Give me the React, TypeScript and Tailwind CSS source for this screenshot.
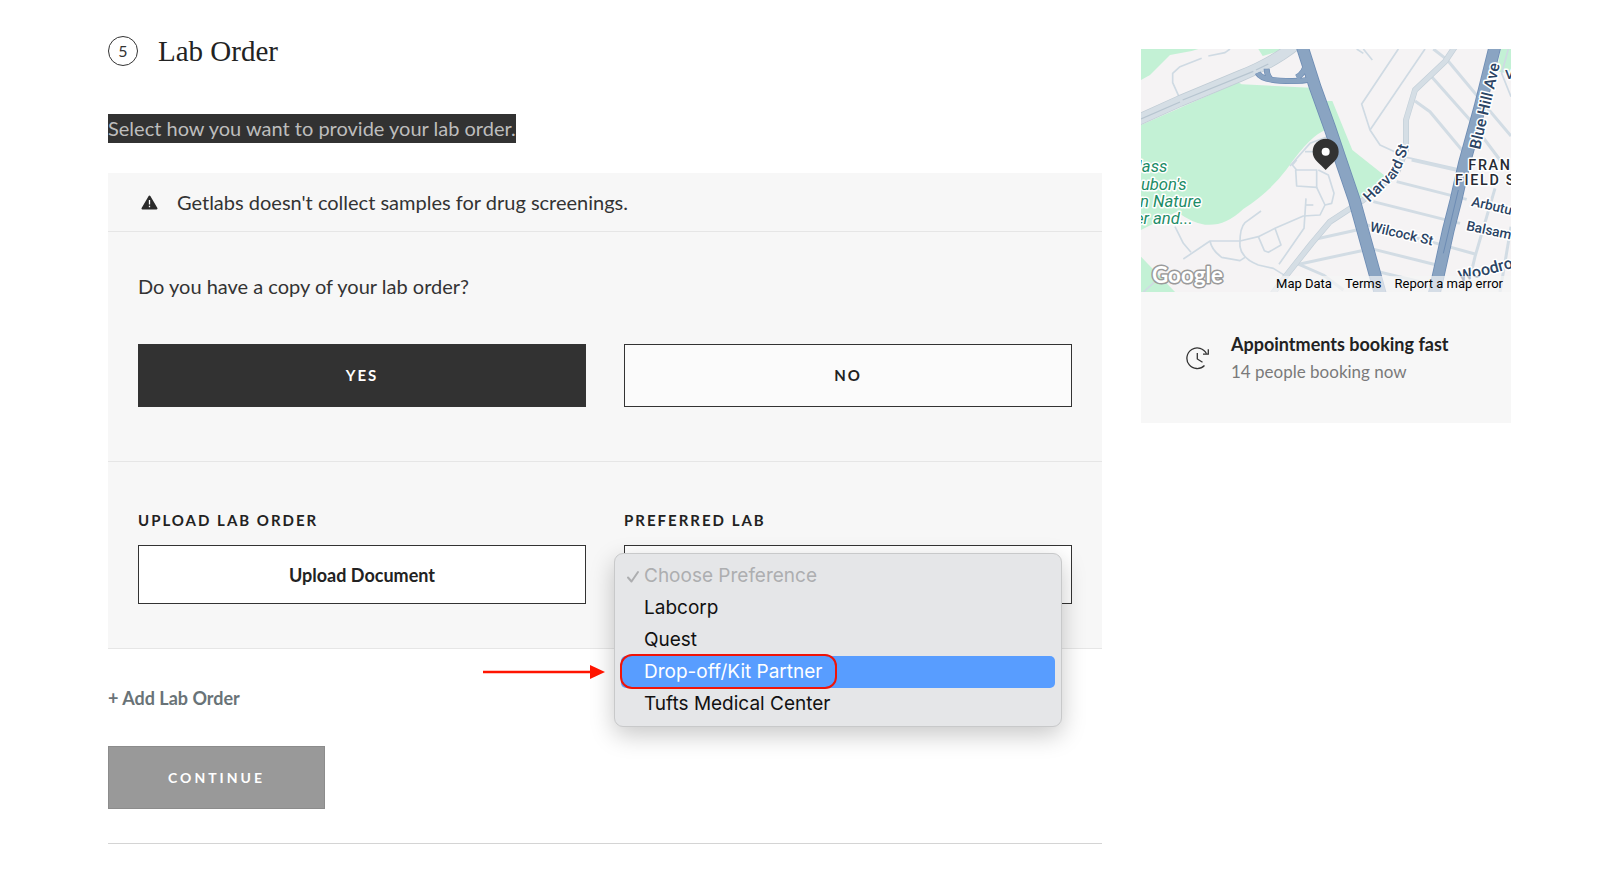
import React from "react";

const parkway = "M20,242 L150,183 L330,108 Q430,68 500,12";
const harvardRoad =
  "M975,20 L945,65 L855,150 L828,240 V330 L800,400 L700,480 L600,545 L545,610 L470,705 L425,765";

const minorRoads = [
  "M300,27 L285,38 L235,48",
  "M215,55 L150,80 L128,100 L128,128 L148,172",
  "M480,378 L540,310 L592,290",
  "M525,335 L560,335",
  "M805,27 L695,192 L720,270 L750,315 L830,352 L1000,390",
  "M885,27 L720,270",
  "M700,27 L727,60 M680,27 L700,40",
  "M1135,27 L1115,100 L1143,170",
  "M160,657 L240,603 L330,603 L385,590 L435,565 L520,528 L570,525 L585,495",
  "M135,560 L160,610 L183,637",
  "M240,603 Q245,630 275,652 L330,662 L345,652",
  "M393,513 L345,548 Q328,565 330,620 Q335,655 385,675 L430,685 L470,710",
  "M435,565 L453,615 L415,637 L403,632 L385,590",
  "M497,390 L500,438 L560,442 L560,390 Z",
  "M500,390 L487,375 L500,360",
  "M560,442 L585,495 L605,490 L612,460 L595,405 L565,390",
  "M528,475 L522,565 L447,673",
  "M525,495 L550,495",
  "M40,756 L75,725",
];

const midRoads = [
  "M910,27 L950,58 L1060,190 L1143,288",
  "M905,110 L1020,240 L1110,360",
  "M855,183 L900,215 L1000,335",
  "M845,360 L1000,395",
  "M800,425 L1010,478",
  "M730,485 L990,550",
  "M685,548 L920,610 L1035,642",
  "M720,625 L920,675",
  "M555,598 L680,570",
  "M510,672 L695,632",
  "M500,670 L580,705 L640,750",
  "M745,695 L870,725",
  "M1095,445 L1035,650 L1010,756",
  "M1143,560 L1110,756",
];

function Label(props: React.SVGProps<SVGTextElement>) {
  return (
    <text
      fontFamily="Roboto, sans-serif"
      fontSize={41}
      fontWeight={500}
      fill="#2b4464"
      stroke="#ffffff"
      strokeWidth={9}
      strokeLinejoin="round"
      paintOrder="stroke"
      {...props}
    />
  );
}

function StreetMap() {
  return (
    <svg viewBox="33 27 1110 729" className="block w-full" role="img" aria-label="Map">
      <rect x="33" y="27" width="1110" height="729" fill="#f5f3f4" />
      <g fill="#c3f1d5">
        <path d="M33,27 H205 L185,33 L120,45 L60,105 L33,120 Z" />
        <path d="M385,27 H470 L398,48 Z" />
        <path d="M33,255 L325,127 L335,133 L540,143 L590,270 Q545,280 470,388 Q420,455 340,507 Q285,560 225,554 Q190,550 140,515 L33,570 Z" />
        <path d="M33,650 L135,756 H33 Z" />
        <path d="M590,183 H607 L667,330 L770,412 L685,478 L640,360 Z" />
        <path d="M1112,27 H1143 V100 L1100,95 Z" />
      </g>
      <g fill="none" stroke="#cfdae3" strokeWidth="5" strokeLinejoin="round">
        {minorRoads.map((d) => (
          <path key={d} d={d} />
        ))}
      </g>
      <g fill="none" stroke="#d2dce4" strokeWidth="9" strokeLinejoin="round">
        {midRoads.map((d) => (
          <path key={d} d={d} />
        ))}
      </g>
      <g fill="none" strokeLinejoin="round">
        <path d={parkway} stroke="#bfcbd4" strokeWidth="35" />
        <path d={parkway} stroke="#d5dee5" strokeWidth="31" />
        <path d="M33,237 L150,186 M158,180 L370,94 M378,90 L415,72" stroke="#b7c5d0" strokeWidth="4" />
        <path d={harvardRoad} stroke="#c3cfd8" strokeWidth="18" />
        <path d={harvardRoad} stroke="#d5dee5" strokeWidth="14" />
      </g>
      <g fill="none" stroke="#6d8cb4">
        <path d="M383,98 Q392,118 450,122 Q505,126 545,118 M410,86 Q410,105 422,118 M528,70 Q524,100 500,112" strokeWidth="18" />
        <path d="M515,15 L555,140 L600,265 L632,360 L673,480 L752,765" strokeWidth="38" />
        <path d="M1096,15 L1050,200 L1003,370 L978,480 L955,570 L912,765" strokeWidth="38" />
      </g>
      <g fill="none" stroke="#8aa4c2">
        <path d="M384,99 Q392,118 450,122 Q505,126 545,118 M410,88 Q410,105 422,118 M528,70 Q524,100 500,112" strokeWidth="14" />
        <path d="M515,15 L555,140 L600,265 L632,360 L673,480 L752,765" strokeWidth="33" />
        <path d="M1096,15 L1050,200 L1003,370 L978,480 L955,570 L912,765" strokeWidth="33" />
      </g>
      <path d="M985,450 L940,640" stroke="#6d8cb4" strokeWidth="3" />

      <defs>
        <path id="harvard" d="M718,488 L796,412 Q836,360 846,240" />
      </defs>
      <Label fontSize={47} transform="translate(1050 330) rotate(-77)">Blue Hill Ave</Label>
      <Label fontSize={45}>
        <textPath href="#harvard">Harvard St</textPath>
      </Label>
      <Label transform="translate(718 573) rotate(13)">Wilcock St</Label>
      <Label transform="translate(1022 497) rotate(13)">Arbutu</Label>
      <Label transform="translate(1007 570) rotate(12)">Balsam</Label>
      <Label fontSize={48} transform="translate(990 726) rotate(-15)">Woodro</Label>
      <Label x={1125} y={116}>V</Label>
      <Label x={1015} y={390} fontSize={43} letterSpacing={5} fill="#262a33">FRAN</Label>
      <Label x={975} y={436} fontSize={43} letterSpacing={5} fill="#262a33">FIELD S</Label>
      <g fontStyle="italic">
        <Label x={112} y={397} fontSize={50} textAnchor="end" fontWeight={400} fill="#1c8c66">Mass</Label>
        <Label x={170} y={450} fontSize={50} textAnchor="end" fontWeight={400} fill="#1c8c66">ubon's</Label>
        <Label x={214} y={501} fontSize={50} textAnchor="end" fontWeight={400} fill="#1c8c66">n Nature</Label>
        <Label x={188} y={551} fontSize={50} textAnchor="end" fontWeight={400} fill="#1c8c66">er and...</Label>
      </g>
      <Label x={66} y={728} fontFamily="Lato, sans-serif" fontSize={67} fontWeight={700} fill="#ffffff" stroke="#9a9a9a" strokeWidth={9}>
        Google
      </Label>
      <path d="M587,390 C570,370 548,360 548,335 A39,39 0 0 1 626,335 C626,360 604,370 587,390 Z" fill="#323232" />
      <circle cx="587" cy="335" r="12" fill="#ffffff" />
    </svg>
  );
}

const choiceButton =
  "flex h-[63px] items-center justify-center border border-[#333] text-[15px] font-bold tracking-[2px]";
const fieldLabel = "text-[15px] leading-5 font-bold tracking-[2px] text-[#222]";

const labs = ["Labcorp", "Quest", "Drop-off/Kit Partner", "Tufts Medical Center"];

function LabMenu() {
  return (
    <ul
      role="listbox"
      aria-label="Lab options"
      className="absolute top-[8px] -left-[10px] z-10 w-full rounded-[9px] border border-[#c8c9ca] bg-[#e5e6e8] p-[6px] font-[Inter,sans-serif] text-[19px] leading-8 text-[#111] shadow-[0_8px_24px_rgba(0,0,0,0.22)]"
    >
      <li role="option" aria-selected="true" className="flex items-center pl-[5px] text-[#adaeb0]">
        <svg viewBox="0 0 14 16" className="mr-[4px] h-4 w-[14px]" fill="none" stroke="currentColor" strokeWidth="2">
          <path d="M2,9.5 L5.5,13.5 L12,4" strokeLinecap="round" strokeLinejoin="round" />
        </svg>
        Choose Preference
      </li>
      {labs.map((lab) =>
        lab.startsWith("Drop") ? (
          <li key={lab} role="option" aria-selected="false" className="relative rounded-[5px] bg-[#589dff] pl-[23px] text-white">
            {lab}
            <span className="absolute -top-[2px] -left-px h-[35px] w-[217px] rounded-[12px] border-2 border-[#f01408]" />
            <svg viewBox="0 0 122 14" className="absolute top-[9px] -left-[138px] h-[14px] w-[122px]">
              <path d="M0,7 H110" stroke="#ff1400" strokeWidth="2.4" />
              <path d="M107,0 L122,7 L107,14 Z" fill="#ff1400" />
            </svg>
          </li>
        ) : (
          <li key={lab} role="option" aria-selected="false" className="pl-[23px]">
            {lab}
          </li>
        )
      )}
    </ul>
  );
}

export default function App() {
  return (
    <div className="flex min-h-screen items-start gap-[39px] bg-white pr-[89px] pl-[108px] font-[Lato,sans-serif] text-[#333]">
      <main className="min-w-0 flex-1 pt-[36px]">
        <header className="flex items-center gap-[20px]">
          <span className="flex size-[30px] items-center justify-center rounded-full border border-[#333] text-base">5</span>
          <h1 className="font-['Liberation_Serif',serif] text-[29px] leading-[30px] text-[#222]">Lab Order</h1>
        </header>

        <p className="mt-[48px] text-xl leading-[29px]">
          <span className="inline-block bg-[#323232] text-[#bdbdbd]">Select how you want to provide your lab order.</span>
        </p>

        <section className="mt-[30px] border-b border-[#e6e6e6] bg-[#f7f7f7]">
          <div className="flex h-[59px] items-center gap-[19px] border-b border-[#e6e6e6] px-[33px] text-xl">
            <svg viewBox="0 0 17 15" className="h-[15px] w-[17px]">
              <path d="M8.5,1.5 L15.5,13.5 H1.5 Z" fill="#2b2b2b" stroke="#2b2b2b" strokeWidth="2" strokeLinejoin="round" />
              <path d="M8.5,5 V9.5 M8.5,10.8 V12.2" stroke="#fff" strokeWidth="1.3" />
            </svg>
            <p>Getlabs doesn't collect samples for drug screenings.</p>
          </div>

          <div className="border-b border-[#e6e6e6] px-[30px] pt-[40px] pb-[54px]">
            <p className="text-xl leading-[28px]">Do you have a copy of your lab order?</p>
            <div className="mt-[44px] grid grid-cols-2 gap-[38px]">
              <button className={`${choiceButton} bg-[#323232] text-white`}>YES</button>
              <button className={`${choiceButton} bg-white/50 text-[#222]`}>NO</button>
            </div>
          </div>

          <div className="grid grid-cols-2 gap-[38px] px-[30px] pt-[48px] pb-[44px]">
            <div className="flex flex-col gap-[15px]">
              <label htmlFor="upload" className={fieldLabel}>UPLOAD LAB ORDER</label>
              <button id="upload" className="h-[59px] border border-[#333] bg-white text-lg font-bold text-[#222]">
                Upload Document
              </button>
            </div>
            <div className="flex flex-col gap-[15px]">
              <label htmlFor="lab" className={fieldLabel}>PREFERRED LAB</label>
              <div className="relative">
                <select id="lab" className="block h-[59px] w-full appearance-none border border-[#333] bg-white" />
                <LabMenu />
              </div>
            </div>
          </div>
        </section>

        <button className="mt-[37px] block text-lg leading-6 font-bold text-[#697377]">+ Add Lab Order</button>
        <button className="mt-[36px] block h-[63px] w-[217px] border border-[#8c8c8c] bg-[#999] text-sm font-bold tracking-[3px] text-white">
          CONTINUE
        </button>
        <hr className="mt-[34px] border-[#d4d4d4]" />
      </main>

      <aside className="mt-[49px] w-[370px] bg-[#f7f7f7]">
        <div className="relative overflow-hidden">
          <StreetMap />
          <div className="absolute right-0 bottom-0 flex h-[16px] items-center gap-[13px] bg-[#f5f5f5]/70 pr-[8px] pl-[6px] font-[Roboto,sans-serif] text-[13px] text-black">
            <button>Map Data</button>
            <a href="#terms">Terms</a>
            <a href="#report">Report a map error</a>
          </div>
        </div>
        <div className="flex items-center gap-[21px] px-[45px] py-[38px]">
          <svg viewBox="0 0 24 24" className="size-6" fill="none" stroke="#333" strokeWidth="1.3">
            <path d="M18.5,19.5 A10.3,10.3 0 1 1 20.5,7.8" />
            <path d="M22.3,3.2 V8.2 H17 M11.3,7 V13 L16.5,16.2" />
          </svg>
          <div className="leading-[27px]">
            <p className="text-lg leading-[28px] font-bold text-[#222]">Appointments booking fast</p>
            <p className="text-[17px] text-[#7a7a7a]">14 people booking now</p>
          </div>
        </div>
      </aside>
    </div>
  );
}
